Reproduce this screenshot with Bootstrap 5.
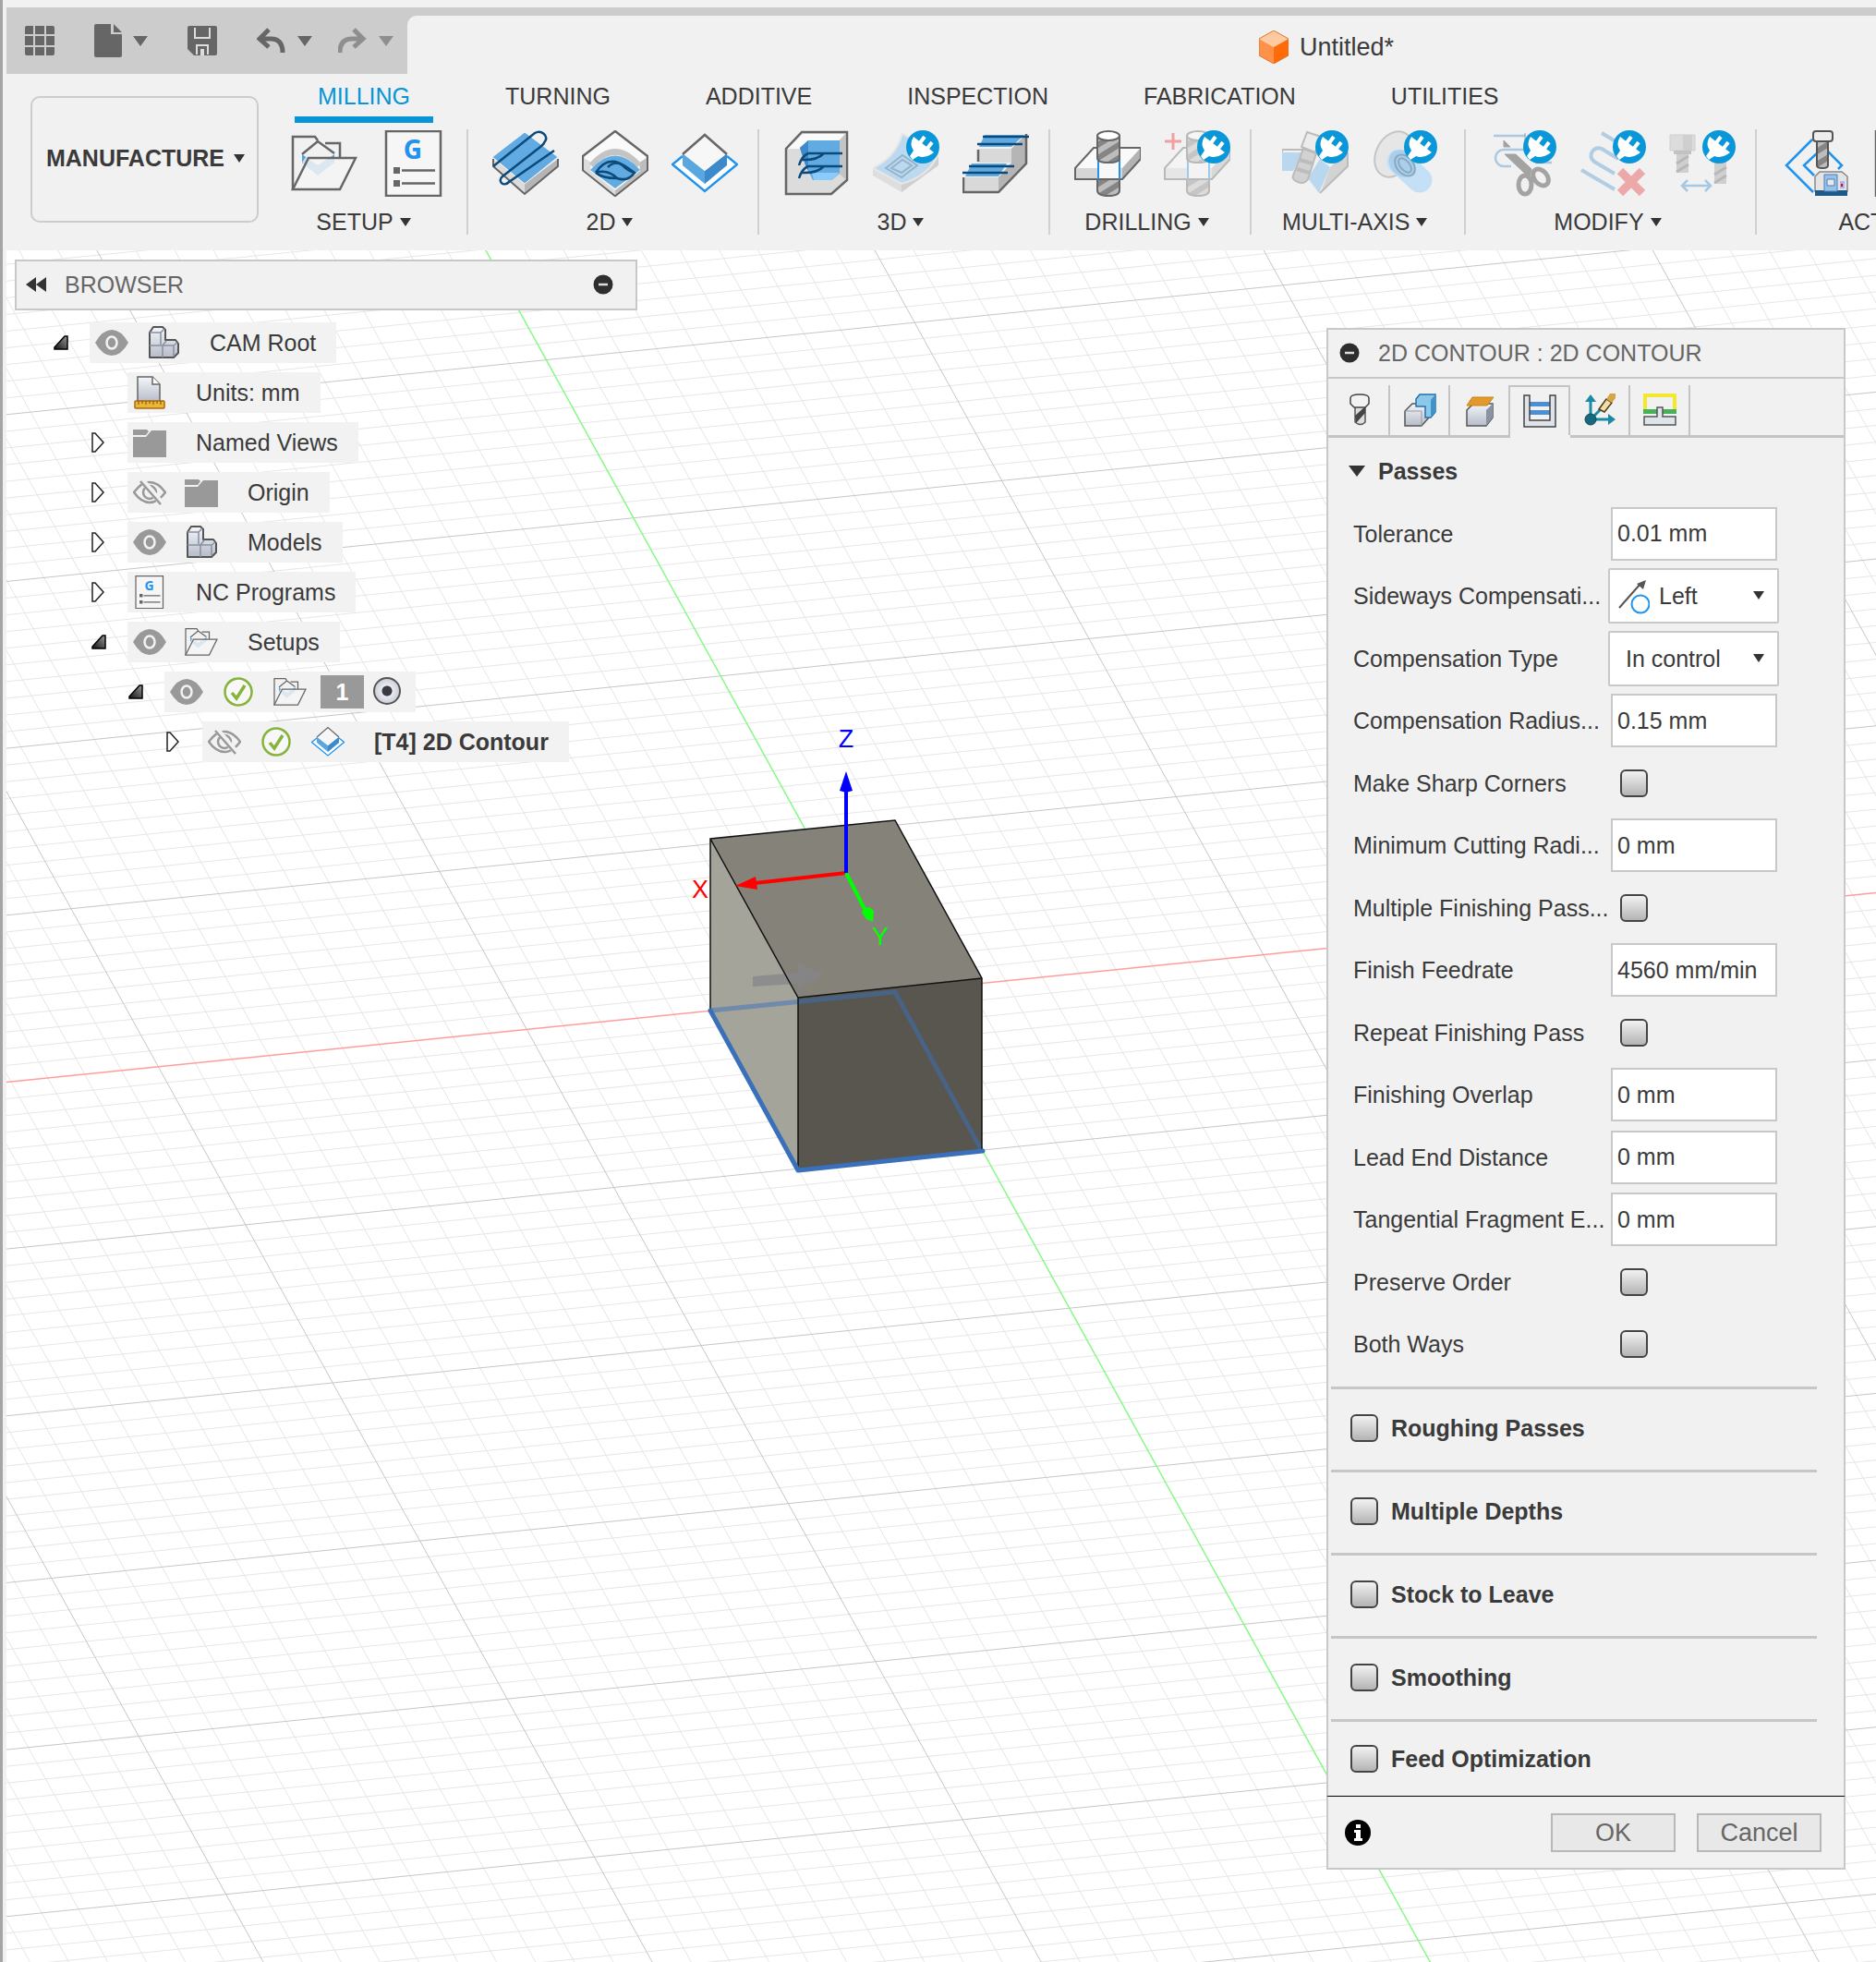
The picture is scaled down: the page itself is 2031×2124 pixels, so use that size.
<!DOCTYPE html>
<html lang="en">
<head>
<meta charset="utf-8">
<meta name="viewport" content="width=device-width, initial-scale=1">
<title>Untitled*</title>
<link href="https://cdn.jsdelivr.net/npm/bootstrap@5.3.0/dist/css/bootstrap.min.css" rel="stylesheet">
<style>
  body { font-family: "Liberation Sans", Arial, sans-serif; font-size: 25px; line-height: 30px; color: #3a3a3a; background: #f1f1f1; }
  button, input, select { font: inherit; color: inherit; }
  button { background: none; border: 0; padding: 0; }
  a { color: inherit; text-decoration: none; }
  svg { display: block; flex: none; }
  .app-frame { min-height: 100vh; overflow: hidden; padding-top: 8px; border-left: 3px solid #a5a5a5; padding-left: 4px; }

  /* quick access bar and document tab */
  .quick-bar { background: #ccc; height: 72px; }
  .quick-tools { width: 434px; padding-left: 20px; gap: 43px; color: #666; }
  .quick-tools .split { gap: 12px; }
  .history { gap: 28px; }
  .faded { opacity: .6; }
  .doc-tab { background: #f1f1f1; border-top-left-radius: 10px; margin-top: 9px; padding-top: 4px; height: 63px; font-size: 27px; }
  .doc-tab::before { content: ""; flex: 922; }
  .doc-tab::after { content: ""; flex: 522; }
  .tri { width: 0; height: 0; border: 6px solid transparent; border-top: 9px solid #333; border-bottom: 0; flex: none; }
  .tri-lg { border-width: 11px 8px 0; border-top-color: #666; }

  /* ribbon */
  .ribbon { padding: 0 0 17px 26px; gap: 8px; }
  .workspace-btn { width: 247px; height: 137px; border: 2px solid #ccc; border-radius: 10px; margin-top: 24px; padding: 0 0 3px 2px; font-weight: bold; gap: 10px; }
  .ribbon-tabs { padding-left: 31px; gap: 53px; }
  .ribbon-tabs a { height: 53px; padding: 9px 25px 0; border-bottom: 7px solid transparent; }
  .ribbon-tabs a.active { color: #0696d7; border-color: #0696d7; }
  .tool-row { padding: 7px 0 0 1px; }
  .tool-group { border-right: 2px solid #d0d0d0; height: 114px; }
  .tool-icons { padding: 1px 9px 0 13px; }
  .tool-icons button { width: 97px; display: flex; justify-content: center; }
  .tool-name { padding: 12px 40px 0 33px; gap: 7px; }

  /* canvas */
  .stage { background: #fff; overflow: hidden; padding: 10px 33px 100px 9px; }
  .scene { position: absolute; inset: 0; width: 100%; height: 100%; }
  .browser-panel { width: 674px; position: relative; }
  .panel-head { height: 55px; background: #f1f1f1; border: 2px solid #c8c8c8; color: #666; padding-bottom: 2px; }
  .browser-tree { margin-top: 13px; }
  .browser-tree li { display: flex; height: 44px; margin-bottom: 10px; }
  .lv0 { padding-left: 42px; } .lv1 { padding-left: 83px; } .lv2 { padding-left: 123px; } .lv3 { padding-left: 164px; }
  .caret { width: 39px; height: 44px; display: flex; align-items: center; }
  .node { display: flex; align-items: center; background: #f2f2f2; }
  .node .slot { width: 56px; padding-left: 6px; }
  .node .node-text { padding: 0 22px 0 18px; }
  .setup-no { width: 47px; height: 36px; background: #999; color: #fff; font-weight: bold; text-align: center; line-height: 36px; margin-left: 1px; }
  .active-dot { appearance: none; width: 30px; height: 30px; margin: 0 16px 2px 10px; border: 2px solid #555; border-radius: 50%; background: radial-gradient(circle, #3a3a42 0 5px, #e8eaf0 6px, #b9bdc8 100%); }

  /* operation dialog */
  .op-panel { width: 562px; margin-top: 74px; position: relative; }
  .op-body { background: #f1f1f1; border: solid #c8c8c8; border-width: 0 2px; }
  .op-tabs { height: 64px; padding-top: 7px; }
  .op-tabs button { width: 65px; border-right: 2px solid #c4c4c4; height: 54px; display: flex; justify-content: center; align-items: center; }
  .op-tabs .cell { border-bottom: 3px solid #c4c4c4; }
  .op-tabs .cell:first-child { padding-left: 2px; }
  .op-tabs .cell.on { border-bottom-color: #f1f1f1; }
  .op-tabs .cell.on button { border-top: 2px solid #c4c4c4; }
  .section-title { padding: 21px 0 0 22px; gap: 14px; font-weight: bold; }
  .section-title .tri { border-width: 12px 9px 0; }
  .field-list { display: grid; grid-auto-rows: 1fr; height: 945px; margin: 19px 0 0; padding-left: 27px; }
  .field-row { display: flex; align-items: center; }
  .field-row label { width: 265px; display: flex; flex: none; white-space: nowrap; }
  .cut { min-width: 245px; flex: none; }
  .op-panel .val { width: 180px; height: 58px; border: 2px solid #c8c8c8; background: #fff; margin-left: 14px; padding: 0 5px; outline: 0; }
  .pick { position: relative; margin-left: 11px; }
  .pick select { width: 185px; height: 60px; appearance: none; border: 2px solid #c8c8c8; border-radius: 2px; background: #fff; padding: 0 30px 0 17px; }
  .pick .with-icon { padding-left: 53px; }
  .pick svg { position: absolute; left: 11px; top: 12px; pointer-events: none; }
  .pick .tri { position: absolute; right: 16px; top: 25px; pointer-events: none; }
  .box-tick { appearance: none; width: 30px; height: 30px; margin: 0; border: 2px solid #444; border-radius: 6px; background: linear-gradient(#f2f2f2, #b4b4b4); flex: none; }
  .field-row .box-tick { margin-left: 24px; }
  .fold-list { padding-top: 12px; }
  .fold { border-top: 3px solid #c6c6c6; margin: 0 29px 0 3px; height: 90px; padding: 0 0 4px 21px; gap: 14px; font-weight: bold; }
  .fold:last-child { height: 83px; padding-bottom: 0; }
  .op-foot { background: #f1f1f1; border: 2px solid #c8c8c8; border-top: 1px solid #000; height: 80px; padding: 0 24px 0 18px; gap: 23px; }
  .op-foot .cmd { width: 135px; height: 42px; border: 2px solid #b8b8b8; background: #e8e8e8; color: #666; font-size: 27px; line-height: 38px; }
</style>
<script src="https://cdn.jsdelivr.net/npm/bootstrap@5.3.0/dist/js/bootstrap.bundle.min.js"></script>
</head>
<body>
<svg width="0" height="0" class="position-absolute" aria-hidden="true">
  <defs>
    <linearGradient id="steel" x1="0" y1="0" x2="0" y2="1"><stop offset="0" stop-color="#f4f6fa"/><stop offset="1" stop-color="#b6bcc9"/></linearGradient>
    <linearGradient id="dark" x1="1" y1="0" x2="0" y2="1"><stop offset="0" stop-color="#999"/><stop offset="1" stop-color="#111"/></linearGradient>
    <pattern id="flute" width="14" height="12" patternUnits="userSpaceOnUse" patternTransform="rotate(-32)"><rect width="14" height="12" fill="#bdbdbd"/><rect width="14" height="6" fill="#858585"/></pattern>
    <symbol id="badge" viewBox="-18 -18 36 36">
      <circle r="18" fill="#0a97d9"/>
      <path d="M-10-11Q-15-3-10 4L-14 10-11 14-5 10Q3 13 12 6Z" fill="#fff"/>
      <path d="M-4-3 2-11M4 3 10-5" stroke="#fff" stroke-width="4"/>
    </symbol>
    <symbol id="drill" viewBox="0 0 72 72">
      <path d="M25 50h24v15q0 6-12 6t-12-6z" fill="url(#flute)" stroke="#666" stroke-width="2"/>
      <path d="M1 41 21 19H72L52 41z" fill="#fafafa"/><path d="M1 41H52V53H1z" fill="#d6d6d6"/><path d="M52 41 72 19V31L52 53z" fill="#b3b3b3"/>
      <path d="M1 41 21 19H72V31L52 53H1z" fill="none" stroke="#666" stroke-width="2"/>
      <path d="M26 30h23v22H26z" fill="#f8f8f8"/><path d="M26 28v25M49 28v25" stroke="#1f93ee" stroke-width="2"/>
      <path d="M25 6h24v24q0 5-12 5t-12-5z" fill="url(#flute)" stroke="#666" stroke-width="2"/>
      <ellipse cx="37" cy="6" rx="12" ry="5" fill="#fff" stroke="#666" stroke-width="2"/>
    </symbol>
    <symbol id="setup" viewBox="0 0 72 72">
      <path d="M2 64V7H26l3 4M37 14H53V30" fill="none" stroke="#666" stroke-width="2.5"/>
      <path d="M12 26 19 31 12 36z" fill="#4fa3e0"/><path d="M12 35 29 49 47 35V26L29 38 16 29z" fill="#cfe0ed"/><path d="M47 26v4h-5z" fill="#4fa3e0"/>
      <path d="M12 26 29 12 47 25" fill="none" stroke="#666" stroke-width="2.5"/>
      <path d="M2 64 19 30H70L53 64z" fill="#fff" fill-opacity=".25" stroke="#666" stroke-width="2.5"/>
    </symbol>
    <symbol id="ncdoc" viewBox="0 0 72 72">
      <path d="M6 1H65V71H6z" fill="#f6f6f6" stroke="#666" stroke-width="2.5"/>
      <text x="35" y="31" font-family="Open Sans, sans-serif" font-weight="bold" font-size="28" fill="#1f93ee" text-anchor="middle">G</text>
      <path d="M14 40h7v7h-7zM14 54h7v7h-7z" fill="#666"/><path d="M23 43.500H59M23 57.500H59" stroke="#666" stroke-width="2.500"/>
    </symbol>
    <symbol id="contour" viewBox="0 0 72 72">
      <path d="M12 28 1 37 36 66 71 37 60 28" fill="#fff" stroke="#1f93ee" stroke-width="2.500"/>
      <path d="M12 25 36 44V58L12 38z" fill="#5aa6de"/><path d="M60 25 36 44V58L60 38z" fill="#3c8acb"/>
      <path d="M12 25 36 5 60 25 36 44z" fill="#f7f7f7"/><path d="M12 26 36 5 60 26" fill="none" stroke="#666" stroke-width="2.500"/>
    </symbol>
    <symbol id="eye" viewBox="0 0 36 36"><path d="M0 18Q8 4 18 4T36 18Q28 32 18 32T0 18z" fill="#999"/><ellipse cx="18" cy="18" rx="5.500" ry="6.500" fill="#999" stroke="#f2f2f2" stroke-width="2.500"/></symbol>
    <symbol id="eyeoff" viewBox="0 0 36 36"><path d="M1 18Q9 7 18 7T35 18Q27 29 18 29T1 18z" fill="none" stroke="#999" stroke-width="2.500"/><circle cx="18" cy="18" r="7" fill="none" stroke="#999" stroke-width="2.500"/><path d="M10 5 32 31" stroke="#f2f2f2" stroke-width="6"/><path d="M8 6 30 31" stroke="#999" stroke-width="2.500"/></symbol>
    <symbol id="folder" viewBox="0 0 36 36"><path d="M0 4h15l2 2-3 4H0z" fill="#999"/><path d="M0 12H14L20 5H36V34H0z" fill="#999"/></symbol>
    <symbol id="models" viewBox="0 0 36 36"><path d="M3 7 7 1H17L20 4V15H31L34 19V29L29 34H3z" fill="url(#steel)" stroke="#555" stroke-width="2" stroke-linejoin="round"/><path d="M3 7H15L19 3M15 7V20M3 21H17M17 34V21L21 16M17 21H29V33M29 21 33 18" fill="none" stroke="#8a90a0" stroke-width="1.500"/></symbol>
    <symbol id="units" viewBox="0 0 36 36"><path d="M5 28V1H21L29 9V28z" fill="url(#steel)" stroke="#666" stroke-width="1.500"/><path d="M21 1V9H29" fill="#fff" stroke="#666" stroke-width="1.500"/><rect x="2" y="27" width="32" height="8" rx="1" fill="#e8b92e" stroke="#b0661a" stroke-width="1.500"/><path d="M6 27v4M10 27v3M14 27v4M18 27v3M22 27v4M26 27v3M30 27v4" stroke="#7a4a10"/></symbol>
    <symbol id="okmark" viewBox="0 0 36 36"><circle cx="18" cy="18" r="14.500" fill="#f8f8f8" stroke="#86b33b" stroke-width="2.500"/><path d="M11 19 16 25 25 11" fill="none" stroke="#86b33b" stroke-width="3.500"/></symbol>
    <symbol id="open" viewBox="0 0 16 16"><path d="M1 15V13L12 1H15V15z" fill="url(#dark)" stroke="#000" stroke-width="1.500"/></symbol>
    <symbol id="closed" viewBox="0 0 14 22"><path d="M1 1H4L13 11 4 21H1z" fill="#fff" stroke="#222" stroke-width="1.500"/></symbol>
    <symbol id="minus" viewBox="0 0 22 22"><circle cx="11" cy="11" r="10.500" fill="#2e2e2e"/><path d="M6 11h10" stroke="#ddd" stroke-width="2.500"/></symbol>
  </defs>
</svg>

<div class="app-frame d-flex flex-column">
  <header>
    <div class="quick-bar d-flex">
      <div class="quick-tools d-flex align-items-center">
        <button aria-label="Data panel"><svg width="32" height="32"><path d="M0 2q0-2 2-2h7v9H0zM11 0h10v9H11zM23 0h7q2 0 2 2v7h-9zM0 11h9v10H0zM11 11h10v10H11zM23 11h9v10h-9zM0 23h9v9H2q-2 0-2-2zM11 23h10v9H11zM23 23h9v7q0 2-2 2h-7z" fill="#666"/></svg></button>
        <button aria-label="File" class="split d-flex align-items-center"><svg width="30" height="36"><path d="M2 0H18V11H30V34q0 2-2 2H2q-2 0-2-2V2q0-2 2-2zM21 0 30 9H21z" fill="#666"/></svg><span class="tri tri-lg"></span></button>
        <button aria-label="Save"><svg width="32" height="32"><path d="M2 0H30q2 0 2 2V30q0 2-2 2H7L0 25V2q0-2 2-2z" fill="#666"/><path d="M8 2V13H24V2M10 31V21H22V31" fill="none" stroke="#ddd" stroke-width="2"/><path d="M14 25h4v7h-4z" fill="#ddd"/></svg></button>
        <div class="history d-flex">
          <button aria-label="Undo" class="split d-flex align-items-center"><svg width="32" height="28"><path d="M13 2 3 12 13 21M4 12H15Q28 12 28 27" fill="none" stroke="#666" stroke-width="5"/></svg><span class="tri tri-lg"></span></button>
          <button aria-label="Redo" class="split d-flex align-items-center faded"><svg width="32" height="28"><path d="M17 2 27 12 17 21M26 12H15Q2 12 2 27" fill="none" stroke="#666" stroke-width="5"/></svg><span class="tri tri-lg"></span></button>
        </div>
      </div>
      <div class="doc-tab d-flex flex-grow-1 align-items-center">
        <svg width="32" height="36"><path d="M16 0 32 9 16 18 0 9z" fill="#ffc9a2"/><path d="M0 9 16 18V36L0 27z" fill="#ff9248"/><path d="M32 9 16 18V36L32 27z" fill="#ff6b08"/><path d="M16 0 32 9V27L16 36 0 27V9z" fill="none" stroke="#d9772f"/></svg>
        <span class="ms-2 ps-1">Untitled*</span>
      </div>
    </div>

    <div class="ribbon d-flex">
      <button class="workspace-btn d-flex align-items-center justify-content-center flex-shrink-0">MANUFACTURE <span class="tri"></span></button>
      <div class="flex-grow-1">
        <nav class="ribbon-tabs d-flex" aria-label="Ribbon">
          <a href="#" class="active">MILLING</a><a href="#">TURNING</a><a href="#">ADDITIVE</a><a href="#">INSPECTION</a><a href="#">FABRICATION</a><a href="#">UTILITIES</a>
        </nav>
        <div class="tool-row d-flex">
          <div class="tool-group flex-shrink-0">
            <div class="tool-icons d-flex justify-content-center">
              <button aria-label="New setup"><svg width="72" height="72"><use href="#setup"/></svg></button>
              <button aria-label="NC program"><svg width="72" height="72"><use href="#ncdoc"/></svg></button>
            </div>
            <button class="tool-name d-flex align-items-center justify-content-center w-100">SETUP<span class="tri"></span></button>
          </div>
          <div class="tool-group flex-shrink-0">
            <div class="tool-icons d-flex justify-content-center">
              <button aria-label="Face"><svg width="72" height="72"><path d="M1 31V39L35 69V58z" fill="#dcdcdc"/><path d="M71 31V39L35 69V58z" fill="#b5b5b5"/><path d="M1 31V39L35 69 71 39V31" fill="none" stroke="#666" stroke-width="2"/><path d="M0 29 35 2 71 29 35 58z" fill="#62abe2" stroke="#f4f4f4"/><path d="M1 39 46 3C53-1 61 6 57 12Q56 15 52 18L11 50C5 55 12 62 18 56L67 22" fill="none" stroke="#0b4a7a" stroke-width="2.500"/></svg></button>
              <button aria-label="2D pocket"><svg width="72" height="72"><path d="M36 1 71 28V43L36 71 1 43V28z" fill="#fafafa" stroke="#666" stroke-width="2.500"/><path d="M2 30 10 35 9 44 36 65V70L2 43z" fill="#dcdcdc"/><path d="M70 30 62 35 63 44 36 65V70L70 43z" fill="#bdbdbd"/><path d="M8 36Q36 4 64 36L60 40Q36 14 12 40z" fill="#c4c4c4"/><path d="M9 43Q36 12 63 43L36 63z" fill="#62abe2"/><path d="M15 46Q24 32 36 34 44 36 57 46 50 56 38 52 28 42 15 46M28 40Q36 32 44 38 50 44 57 46M15 46Q22 52 38 52" fill="none" stroke="#0b4a7a" stroke-width="2.500"/></svg></button>
              <button aria-label="2D contour"><svg width="72" height="72"><use href="#contour"/></svg></button>
            </div>
            <button class="tool-name d-flex align-items-center justify-content-center w-100">2D<span class="tri"></span></button>
          </div>
          <div class="tool-group flex-shrink-0">
            <div class="tool-icons d-flex justify-content-center">
              <button aria-label="Adaptive clearing"><svg width="72" height="72"><path d="M20 2H69V54L52 69H3V20z" fill="#dcdcdc" stroke="#666" stroke-width="2.500"/><path d="M21 4H67L60 11H27L18 20H5z" fill="#fafafa"/><path d="M67 4V53L61 47V11z" fill="#c4c4c4"/><path d="M27 11H61V47L52 54H32L24 38 18 19z" fill="#62abe2"/><path d="M27 11V44L32 54 24 38 18 19z" fill="#3c8acb"/><path d="M31 46H61L52 54H33z" fill="#8ccafa"/><path d="M64 25H27Q20 28 17 38M64 39H27Q20 42 17 52M20 32Q36 33 44 25M20 46Q36 47 44 39" fill="none" stroke="#0b4a7a" stroke-width="2.500"/></svg></button>
              <button aria-label="Pocket clearing"><svg width="72" height="72"><path d="M0 41V49L31 67 71 36V26z" fill="#dedede"/><path d="M31 58V67L71 38V26z" fill="#cfcfcf"/><path d="M0 41Q24 30 32 4L71 26Q60 50 31 58z" fill="#bcd9ef" stroke="#e6e6e6" stroke-width="2"/><path d="M14 41 32 27 48 38 31 51zM20 41 32 32 42 38 31 46z" fill="none" stroke="#94b4cb" stroke-width="2"/><use href="#badge" x="36" y="0" width="36" height="36"/></svg></button>
              <button aria-label="Parallel"><svg width="72" height="72"><path d="M17 20H53V35H17zM1 51H39V67H1z" fill="#d9d9d9"/><path d="M53 20 69 4V36L39 67V51L53 35z" fill="#b5b5b5"/><path d="M24 5H67L53 18H18zM10 36H48L39 50H3z" fill="#62abe2"/><path d="M17 21V34M1 51V67H39L69 36V4" fill="none" stroke="#666" stroke-width="2.500"/><path d="M22 7H72M16 15H65M7 39H56M0 46H49" stroke="#0b4a7a" stroke-width="2.500"/></svg></button>
            </div>
            <button class="tool-name d-flex align-items-center justify-content-center w-100">3D<span class="tri"></span></button>
          </div>
          <div class="tool-group flex-shrink-0">
            <div class="tool-icons d-flex justify-content-center">
              <button aria-label="Drill"><svg width="72" height="72"><use href="#drill"/></svg></button>
              <button aria-label="Hole recognition"><svg width="72" height="72"><g opacity=".4"><use href="#drill"/></g><path d="M1 12H19M10 3V21" stroke="#f0a0a0" stroke-width="3"/><use href="#badge" x="36" y="0" width="36" height="36"/></svg></button>
            </div>
            <button class="tool-name d-flex align-items-center justify-content-center w-100">DRILLING<span class="tri"></span></button>
          </div>
          <div class="tool-group flex-shrink-0">
            <div class="tool-icons d-flex justify-content-center">
              <button aria-label="Swarf"><svg width="72" height="72"><path d="M0 24H22L12 44H0zM41 31 52 40 40 68 28 52z" fill="#b9d8ef"/><path d="M52 40 71 22V39L42 67z" fill="#d3d3d3"/><path d="M0 24V21H22M71 24V39L41 68" fill="none" stroke="#bbb" stroke-width="2"/><path d="M23 20 37 25 28 53Q24 59 17 56T12 49z" fill="#d2d2d2" stroke="#bbb" stroke-width="2"/><path d="M19 32 33 36M16 42 30 46" stroke="#bcbcbc" stroke-width="4"/><path d="M27 2 42 7 36 24 21 18z" fill="#ececec" stroke="#bbb" stroke-width="2" stroke-linejoin="round"/><use href="#badge" x="36" y="0" width="36" height="36"/></svg></button>
              <button aria-label="Multi-axis contour"><svg width="72" height="72"><ellipse cx="24" cy="26" rx="19" ry="26" transform="rotate(28 24 26)" fill="#e6e6e6" stroke="#c4c4c4" stroke-width="2"/><path d="M30 34 52 54" stroke="#c3e0f6" stroke-width="27" stroke-linecap="round"/><ellipse cx="33" cy="36" rx="13" ry="16" transform="rotate(-40 33 36)" fill="#a9cfec"/><ellipse cx="36" cy="38" rx="9" ry="13" transform="rotate(-40 36 38)" fill="none" stroke="#8ba9be" stroke-width="2"/><ellipse cx="36" cy="38" rx="5" ry="9" transform="rotate(-40 36 38)" fill="none" stroke="#8ba9be" stroke-width="2"/><use href="#badge" x="35" y="0" width="36" height="36"/></svg></button>
            </div>
            <button class="tool-name d-flex align-items-center justify-content-center w-100">MULTI-AXIS<span class="tri"></span></button>
          </div>
          <div class="tool-group flex-shrink-0">
            <div class="tool-icons d-flex justify-content-center">
              <button aria-label="Trim toolpath"><svg width="72" height="72"><g transform="translate(3 0)"><path d="M1 6H36M34 21H12a9 9 0 0 0 0 18H20M46 35H64" fill="none" stroke="#abc9e2" stroke-width="2.500"/><path d="M12 11 19 18H12zM13 26H25L42 42 40 50 34 46zM35 3V14" fill="#a3a3a3" stroke="#a3a3a3"/><ellipse cx="35" cy="59" rx="7" ry="10" fill="none" stroke="#a3a3a3" stroke-width="5"/><ellipse cx="52" cy="51" rx="7" ry="10" transform="rotate(-40 52 51)" fill="none" stroke="#a3a3a3" stroke-width="5"/><use href="#badge" x="33" y="0" width="36" height="36"/></g></svg></button>
              <button aria-label="Delete passes"><svg width="72" height="72"><path d="M24 3 39 12M38 47 16 34C7 27 17 16 24 20L42 31M2 43 38 64" fill="none" stroke="#b1cde4" stroke-width="4"/><path d="M44 44 68 68M68 44 44 68" stroke="#eda9a9" stroke-width="9"/><use href="#badge" x="36" y="0" width="36" height="36"/></svg></button>
              <button aria-label="Replace tool"><svg width="72" height="72"><path d="M1 5H28V22H1z" fill="#dcdcdc" stroke="#cfcfcf"/><path d="M15 5H25V22H15z" fill="#cfcfcf"/><path d="M5 22H24V26H5z" fill="#c2c2c2"/><path d="M8 26H21V46H8zM49 34H62V58H49z" fill="#cfcfcf"/><path d="M8 36 21 28M8 45 21 37M49 48 62 40M49 57 62 49" stroke="#b8b8b8" stroke-width="3"/><path d="M15 60H45M20 54 14 60 20 66M39 54 45 60 39 66" fill="none" stroke="#a5c8e4" stroke-width="2.500"/><use href="#badge" x="36" y="0" width="36" height="36"/></svg></button>
            </div>
            <button class="tool-name d-flex align-items-center justify-content-center w-100">MODIFY<span class="tri"></span></button>
          </div>
          <div class="tool-group flex-shrink-0">
            <div class="tool-icons d-flex justify-content-center">
              <button aria-label="Simulate with machine"><svg width="74" height="72"><g transform="translate(3 0)"><path d="M32 10 4 38 33 67M38 24 23 38 34 49M48 22 64 38 60 42" fill="none" stroke="#1f93ee" stroke-width="2.500"/><path d="M37 11H49V38q0 3-6 3t-6-3z" fill="url(#flute)" stroke="#555" stroke-width="2"/><rect x="33" y="1" width="21" height="11" rx="3" fill="#eee" stroke="#555" stroke-width="2"/><path d="M35 50 40 45H64L70 50V66H35z" fill="#e4e4e4" stroke="#888" stroke-width="1.500"/><path d="M35 65H70V71H35z" fill="#1d5a88"/><path d="M45 48H59V66H45z" fill="#98c1e8" stroke="#4a80b8"/><path d="M48 53h8v7h-8z" fill="#e8e8e8" stroke="#4a80b8"/><path d="M62 55h5v8h-5z" fill="#a8b8e8"/><path d="M63 58h2v3h-2z" fill="#d04"/></g></svg></button>
              <button aria-label="Post process"><svg width="72" height="72"><use href="#ncdoc"/></svg></button>
              <button aria-label="Setup sheet"><svg width="72" height="72"><use href="#ncdoc"/></svg></button>
            </div>
            <button class="tool-name d-flex align-items-center justify-content-center w-100">ACTIONS<span class="tri"></span></button>
          </div>
        </div>
      </div>
    </div>
  </header>

  <main class="stage position-relative flex-grow-1 d-flex justify-content-between align-items-start">
    <svg class="scene" aria-label="Model view">
      <g transform="translate(962 803)">
        <path id="minor" fill="none" stroke="#e6e6e6"/>
        <path id="major" fill="none" stroke="#c6c6c6"/>
        <path id="axisX" fill="none" stroke="#ff9d9d" stroke-width="1.500"/>
        <path id="axisY" fill="none" stroke="#86f986" stroke-width="1.500"/>
        <path d="M-200-166 0-186 94-15-105 6z" fill="#85827a"/>
        <path d="M-200-166-105 6V193L-200 20z" fill="#a4a49b"/>
        <path d="M-105 6 94-15V172L-105 193z" fill="#58564f"/>
        <path d="M-200 20 0 0 94 172" fill="none" stroke="#3a70ba" stroke-opacity=".5" stroke-width="5"/>
        <path d="M-154-17-105-21V-31L-77-20-105-2V-9L-154-6z" fill="#858589" fill-opacity=".75"/>
        <path d="M-200 20V-166L0-186 94-15V172M-200-166-105 6 94-15M-105 6V193" fill="none" stroke="#111" stroke-width="1.500"/>
        <path d="M-200 20-105 193 95 172" fill="none" stroke="#3a70ba" stroke-width="5" stroke-linejoin="round" stroke-linecap="round"/>
        <path d="M-53-129-152-118" stroke="#f00" stroke-width="4"/><path d="M-173-115-151-125-149-111z" fill="#f00"/>
        <path d="M-53-129-32-88" stroke="#0f0" stroke-width="4"/><path d="M-36-86-34-90-28-92-23-88-24-76-31-79z" fill="#0f0"/>
        <path d="M-53-129V-218" stroke="#00f" stroke-width="4"/><path d="M-53-239-46-218-53-216-60-218z" fill="#00f"/>
        <g font-size="27" text-anchor="middle"><text x="-211" y="-102" fill="#f00">X</text><text x="-16" y="-51" fill="#0f0">Y</text><text x="-53" y="-265" fill="#00f">Z</text></g>
      </g>
    </svg>

    <section class="browser-panel">
      <div class="panel-head d-flex align-items-center px-2">
        <button aria-label="Collapse"><svg width="24" height="20"><path d="M13 2V18L2 10zM24 2V18L13 10z" fill="#333"/></svg></button>
        <span class="ms-3 flex-grow-1 ps-1">BROWSER</span>
        <button aria-label="Hide" class="me-3"><svg width="22" height="22"><use href="#minus"/></svg></button>
      </div>
      <ul class="browser-tree list-unstyled mb-0">
        <li class="lv0"><button class="caret" aria-label="Collapse"><svg width="16" height="16"><use href="#open"/></svg></button><div class="node"><span class="slot"><svg width="36" height="36"><use href="#eye"/></svg></span><span class="slot"><svg width="36" height="36"><use href="#models"/></svg></span><span class="node-text">CAM Root</span></div></li>
        <li class="lv1"><span class="caret"></span><div class="node"><span class="slot"><svg width="36" height="36"><use href="#units"/></svg></span><span class="node-text">Units: mm</span></div></li>
        <li class="lv1"><button class="caret" aria-label="Expand"><svg width="14" height="22"><use href="#closed"/></svg></button><div class="node"><span class="slot"><svg width="36" height="36"><use href="#folder"/></svg></span><span class="node-text">Named Views</span></div></li>
        <li class="lv1"><button class="caret" aria-label="Expand"><svg width="14" height="22"><use href="#closed"/></svg></button><div class="node"><span class="slot"><svg width="36" height="36"><use href="#eyeoff"/></svg></span><span class="slot"><svg width="36" height="36"><use href="#folder"/></svg></span><span class="node-text">Origin</span></div></li>
        <li class="lv1"><button class="caret" aria-label="Expand"><svg width="14" height="22"><use href="#closed"/></svg></button><div class="node"><span class="slot"><svg width="36" height="36"><use href="#eye"/></svg></span><span class="slot"><svg width="36" height="36"><use href="#models"/></svg></span><span class="node-text">Models</span></div></li>
        <li class="lv1"><button class="caret" aria-label="Expand"><svg width="14" height="22"><use href="#closed"/></svg></button><div class="node"><span class="slot"><svg width="36" height="36"><use href="#ncdoc"/></svg></span><span class="node-text">NC Programs</span></div></li>
        <li class="lv1"><button class="caret" aria-label="Collapse"><svg width="16" height="16"><use href="#open"/></svg></button><div class="node"><span class="slot"><svg width="36" height="36"><use href="#eye"/></svg></span><span class="slot"><svg width="36" height="36"><use href="#setup"/></svg></span><span class="node-text">Setups</span></div></li>
        <li class="lv2"><button class="caret" aria-label="Collapse"><svg width="16" height="16"><use href="#open"/></svg></button><div class="node"><span class="slot"><svg width="36" height="36"><use href="#eye"/></svg></span><span class="slot"><svg width="36" height="36"><use href="#okmark"/></svg></span><span class="slot"><svg width="36" height="36"><use href="#setup"/></svg></span><span class="setup-no">1</span><input type="radio" class="active-dot" aria-label="Active setup" checked></div></li>
        <li class="lv3"><button class="caret" aria-label="Expand"><svg width="14" height="22"><use href="#closed"/></svg></button><div class="node"><span class="slot"><svg width="36" height="36"><use href="#eyeoff"/></svg></span><span class="slot"><svg width="36" height="36"><use href="#okmark"/></svg></span><span class="slot"><svg width="36" height="36"><use href="#contour"/></svg></span><strong class="node-text">[T4] 2D Contour</strong></div></li>
      </ul>
    </section>

    <form class="op-panel" onsubmit="return false">
      <div class="panel-head d-flex align-items-center">
        <button type="button" aria-label="Collapse" class="ms-2 ps-1"><svg width="22" height="22"><use href="#minus"/></svg></button>
        <span class="ms-3 ps-1">2D CONTOUR : 2D CONTOUR</span>
      </div>
      <div class="op-body">
        <div class="op-tabs d-flex">
          <div class="cell"><button type="button" aria-label="Tool"><svg width="36" height="36"><path d="M13 12H24V31q-5 5-11 0z" fill="#ddd" stroke="#555" stroke-width="1.500"/><path d="M13 24 24 14V21L14 32z" fill="#444"/><path d="M8 5q0-4 10-4t10 4V11l-4 4H12L8 11z" fill="#f2f2f2" stroke="#444" stroke-width="1.500"/></svg></button></div>
          <div class="cell"><button type="button" aria-label="Geometry"><svg width="36" height="36"><path d="M2 19 10 11H28V26L20 35H2z" fill="url(#steel)" stroke="#555" stroke-width="1.500"/><path d="M2 19H20V35" fill="none" stroke="#999"/><path d="M14 6 18 1H35V20L30 26H24V14H14z" fill="#8cc8ea" stroke="#2470a8" stroke-width="1.500"/><path d="M30 7 35 1V20L30 26z" fill="#3f93c8"/></svg></button></div>
          <div class="cell"><button type="button" aria-label="Heights"><svg width="36" height="36"><path d="M4 18 11 11H32V26L25 35H4z" fill="url(#steel)" stroke="#555" stroke-width="1.500"/><path d="M25 18 32 11V26L25 35z" fill="#8b93a3"/><path d="M10 4H33L26 13H4z" fill="#e39a2d" stroke="#c9801a"/></svg></button></div>
          <div class="cell on"><button type="button" aria-label="Passes"><svg width="36" height="36"><path d="M7 8H29V13H7zM7 17H29V22H7z" fill="#4a8fd6"/><path d="M1 1H7V28H29V1H35V35H1z" fill="#dfe3ea" stroke="#444" stroke-width="1.500"/></svg></button></div>
          <div class="cell"><button type="button" aria-label="Linking"><svg width="36" height="36"><path d="M8 28V6M8 28H30M8 28 18 18" stroke="#1b8ba3" stroke-width="3"/><path d="M2 9 8 1 14 9zM27 22 35 28 27 34z" fill="#1b8ba3"/><circle cx="8" cy="28" r="6" fill="#17697d" stroke="#0d4555"/><path d="M17 17 25 6 31 10 23 20z" fill="#f3dca6" stroke="#4a3a1a" stroke-width="1.500"/><path d="M25 6 29 0H35V5L31 10z" fill="#d6a545"/></svg></button></div>
          <div class="cell"><button type="button" aria-label="Holder"><svg width="36" height="36"><path d="M2 19V2H34V19" fill="none" stroke="#f5e62e" stroke-width="4"/><path d="M0 17H36V22H0z" fill="#46b15a"/><path d="M15 15H21V25H35V34H1V25H15z" fill="#dfe3ea" stroke="#555" stroke-width="1.500"/></svg></button></div>
          <div class="cell flex-grow-1"></div>
        </div>
        <div class="section-title d-flex align-items-center"><span class="tri"></span><span>Passes</span></div>
        <div class="field-list">
          <div class="field-row"><label for="f1">Tolerance</label><input id="f1" class="val" value="0.01 mm"></div>
          <div class="field-row"><label for="f2"><span class="cut">Sideways Compensati</span>...</label><div class="pick"><select id="f2" class="with-icon"><option>Left</option></select><svg width="34" height="38"><path d="M1 31 24 5" stroke="#555" stroke-width="2"/><path d="M30 1 20 5 27 11z" fill="#555"/><circle cx="24" cy="27" r="9.500" fill="none" stroke="#1f93ee" stroke-width="2"/></svg><span class="tri"></span></div></div>
          <div class="field-row"><label for="f3">Compensation Type</label><div class="pick"><select id="f3"><option>In control</option></select><span class="tri"></span></div></div>
          <div class="field-row"><label for="f4"><span class="cut">Compensation Radius</span>...</label><input id="f4" class="val" value="0.15 mm"></div>
          <div class="field-row"><label for="f5">Make Sharp Corners</label><input id="f5" type="checkbox" class="box-tick"></div>
          <div class="field-row"><label for="f6"><span class="cut">Minimum Cutting Radi</span>...</label><input id="f6" class="val" value="0 mm"></div>
          <div class="field-row"><label for="f7"><span class="cut">Multiple Finishing Pass</span>...</label><input id="f7" type="checkbox" class="box-tick"></div>
          <div class="field-row"><label for="f8">Finish Feedrate</label><input id="f8" class="val" value="4560 mm/min"></div>
          <div class="field-row"><label for="f9">Repeat Finishing Pass</label><input id="f9" type="checkbox" class="box-tick"></div>
          <div class="field-row"><label for="f10">Finishing Overlap</label><input id="f10" class="val" value="0 mm"></div>
          <div class="field-row"><label for="f11">Lead End Distance</label><input id="f11" class="val" value="0 mm"></div>
          <div class="field-row"><label for="f12"><span class="cut">Tangential Fragment E</span>...</label><input id="f12" class="val" value="0 mm"></div>
          <div class="field-row"><label for="f13">Preserve Order</label><input id="f13" type="checkbox" class="box-tick"></div>
          <div class="field-row"><label for="f14">Both Ways</label><input id="f14" type="checkbox" class="box-tick"></div>
        </div>
        <div class="fold-list">
          <div class="fold d-flex align-items-center"><input id="s1" type="checkbox" class="box-tick"><label for="s1">Roughing Passes</label></div>
          <div class="fold d-flex align-items-center"><input id="s2" type="checkbox" class="box-tick"><label for="s2">Multiple Depths</label></div>
          <div class="fold d-flex align-items-center"><input id="s3" type="checkbox" class="box-tick"><label for="s3">Stock to Leave</label></div>
          <div class="fold d-flex align-items-center"><input id="s4" type="checkbox" class="box-tick"><label for="s4">Smoothing</label></div>
          <div class="fold d-flex align-items-center"><input id="s5" type="checkbox" class="box-tick"><label for="s5">Feed Optimization</label></div>
        </div>
      </div>
      <div class="op-foot d-flex align-items-center">
        <button type="button" aria-label="Info" class="me-auto"><svg width="28" height="28"><circle cx="14" cy="14" r="14" fill="#000"/><path d="M12 5h5v4h-5zM10 11h7v9h2v3h-9v-3h2v-6h-2z" fill="#fff"/></svg></button>
        <button type="button" class="cmd">OK</button>
        <button type="button" class="cmd">Cancel</button>
      </div>
    </form>
  </main>
</div>

<script>
  // Ground grid: u and v are ten grid cells along each world axis, in screen pixels.
  const u = [398.8, -40.4], v = [94.4, 171.1];
  const segment = (a, b, s, span) => {
    const x = a[0] * s / 10, y = a[1] * s / 10;
    return `M${x - b[0] * span} ${y - b[1] * span}L${x + b[0] * span} ${y + b[1] * span}`;
  };
  let minor = '', major = '';
  for (let i = -120; i <= 120; i++) {
    if (i === 0) continue;
    const both = segment(u, v, i, 14) + segment(v, u, i, 8);
    if (i % 10) minor += both; else major += both;
  }
  document.getElementById('minor').setAttribute('d', minor);
  document.getElementById('major').setAttribute('d', major);
  document.getElementById('axisX').setAttribute('d', segment(v, u, 0, 8));
  document.getElementById('axisY').setAttribute('d', segment(u, v, 0, 14));
</script>
</body>
</html>
